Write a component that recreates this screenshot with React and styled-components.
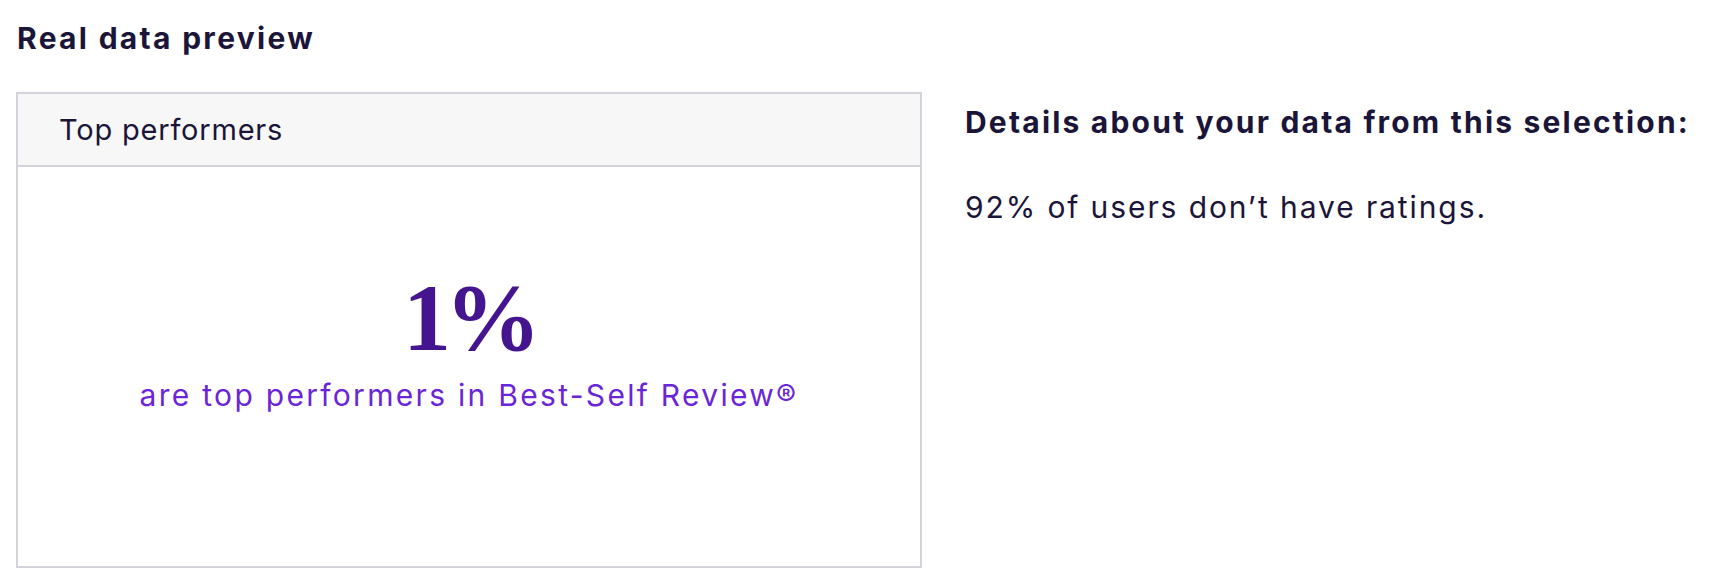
import React from "react"
import styled, { createGlobalStyle } from "styled-components"

const GlobalStyle = createGlobalStyle`
  body {
    margin: 0;
    background: #ffffff;
    font-family: Inter, "Noto Sans", sans-serif;
    color: #1b1639;
  }
`

const Page = styled.div`
  padding: 20px 0 0 16px;
`
const PageTitle = styled.h2`
  margin: 0 0 36px 1px;
  font-size: 30px;
  line-height: 36px;
  font-weight: 700;
  letter-spacing: 2.3px;
`
const Row = styled.div`
  display: flex;
  align-items: flex-start;
  gap: 43px;
`
const Card = styled.div`
  width: 902px;
  height: 472px;
  border: 2px solid #d3d3db;
  display: flex;
  flex-direction: column;
`
const CardHeader = styled.div`
  height: 71px;
  display: flex;
  align-items: center;
  padding-left: 41px;
  background: #f7f7f7;
  border-bottom: 2px solid #d3d3db;
  font-size: 29px;
  letter-spacing: 0.8px;
`
const CardBody = styled.div`
  flex: 1;
  display: flex;
  flex-direction: column;
  align-items: center;
  padding-top: 103px;
`
const BigStat = styled.div`
  font-family: "Liberation Serif", "Times New Roman", serif;
  font-weight: 700;
  font-size: 96px;
  line-height: 96px;
  color: #45148f;
  letter-spacing: -6px;
`
const StatLabel = styled.div`
  margin-top: 11px;
  font-size: 30px;
  line-height: 36px;
  color: #6a25d9;
  letter-spacing: 2.3px;
`
const Details = styled.div`
  padding-top: 12px;
`
const DetailsTitle = styled.h3`
  margin: 0 0 49px;
  font-size: 30px;
  line-height: 36px;
  font-weight: 700;
  letter-spacing: 2.2px;
`
const DetailsText = styled.p`
  margin: 0;
  font-size: 30px;
  line-height: 36px;
  letter-spacing: 1.9px;
`

const App = () => {
  return (
    <Page>
      <GlobalStyle />
      <PageTitle>Real data preview</PageTitle>
      <Row>
        <Card>
          <CardHeader>Top performers</CardHeader>
          <CardBody>
            <BigStat>1%</BigStat>
            <StatLabel>are top performers in Best-Self Review®</StatLabel>
          </CardBody>
        </Card>
        <Details>
          <DetailsTitle>Details about your data from this selection:</DetailsTitle>
          <DetailsText>92% of users don’t have ratings.</DetailsText>
        </Details>
      </Row>
    </Page>
  )
}

export default App
